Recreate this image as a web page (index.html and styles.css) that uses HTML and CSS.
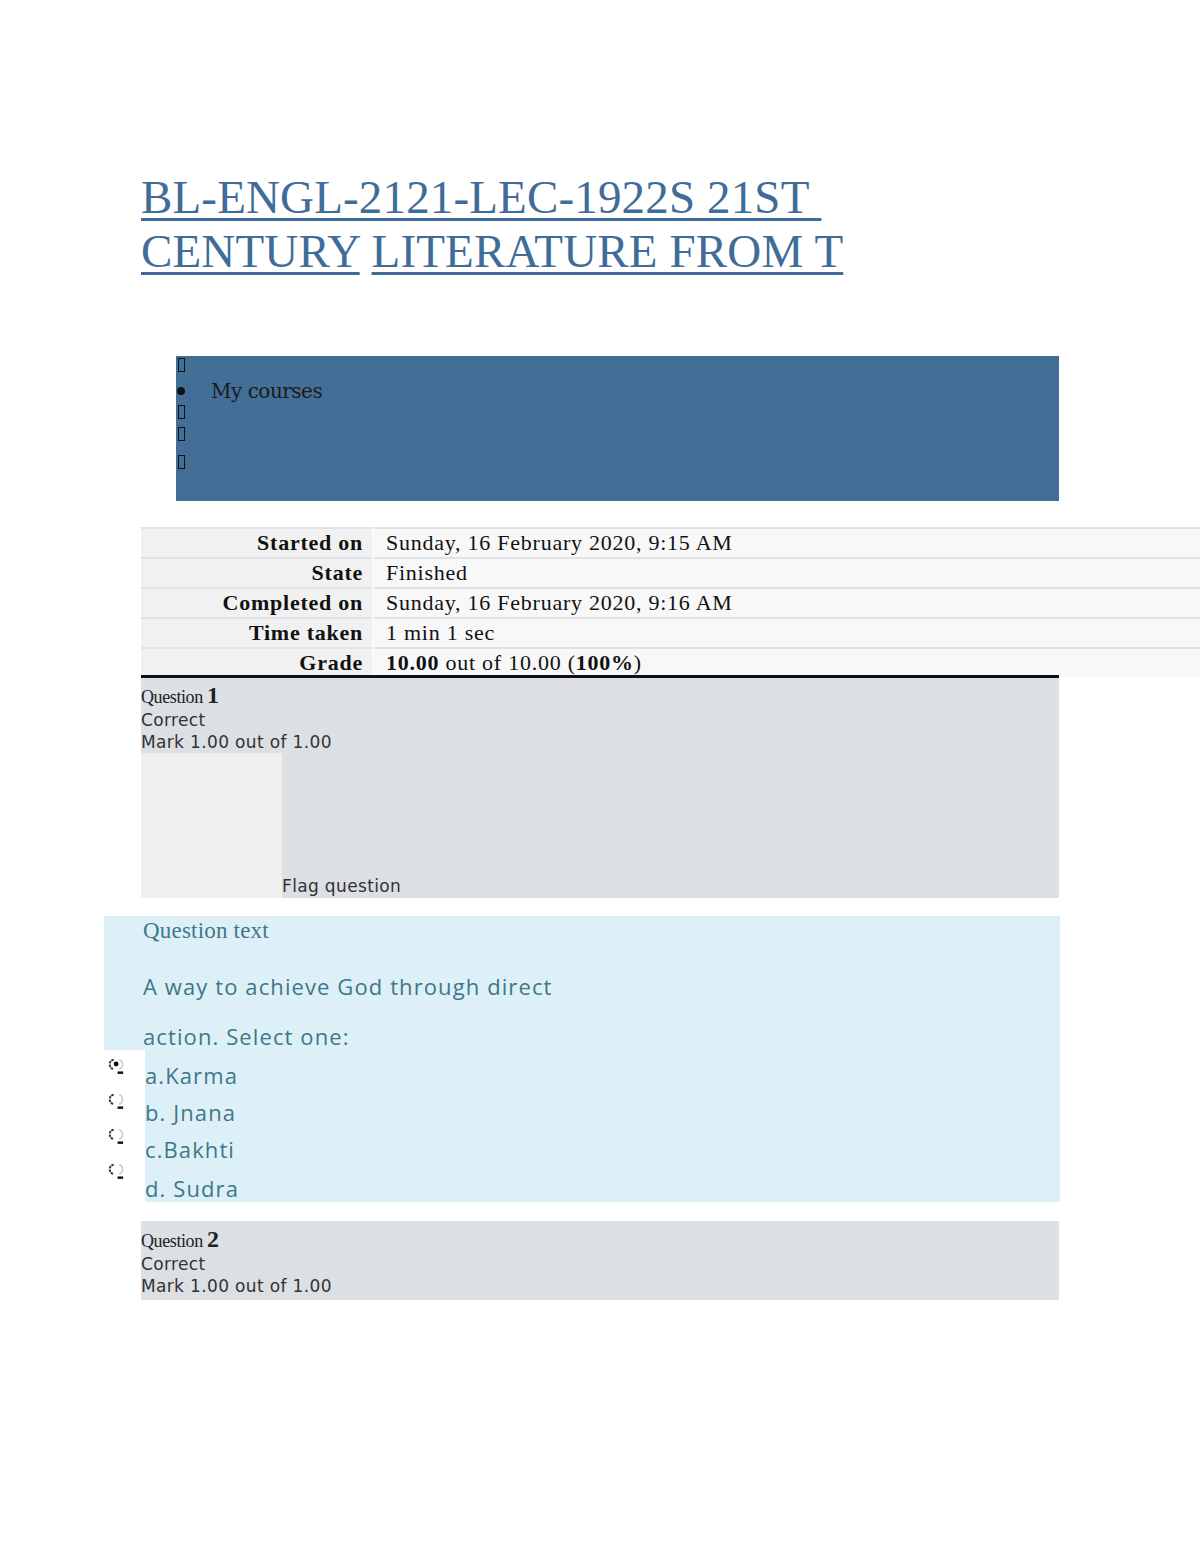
FILE: index.html
```html
<!DOCTYPE html>
<html lang="en">
<head>
<meta charset="utf-8">
<title>Quiz review</title>
<link rel="stylesheet" href="styles.css">
</head>
<body>
<div class="page">
  <h1 class="course-title">
    <a href="#" class="tlink">BL-ENGL-2121-LEC-1922S 21ST&nbsp;</a><br>
    <a href="#" class="tlink">CENTURY</a> <a href="#" class="tlink">LITERATURE FROM T</a>
  </h1>

  <nav class="navbox">
    <ul class="navlist">
      <li class="nav-item r1"><span class="tofu"></span></li>
      <li class="nav-item r2"><span class="dot"></span><span class="nav-text">My courses</span></li>
      <li class="nav-item r3"><span class="tofu"></span></li>
      <li class="nav-item r4"><span class="tofu"></span></li>
      <li class="nav-item r5"><span class="tofu"></span></li>
    </ul>
  </nav>

  <table class="summary">
    <tr><th>Started on</th><td>Sunday, 16 February 2020, 9:15 AM</td></tr>
    <tr><th>State</th><td>Finished</td></tr>
    <tr><th>Completed on</th><td>Sunday, 16 February 2020, 9:16 AM</td></tr>
    <tr><th>Time taken</th><td>1 min 1 sec</td></tr>
    <tr><th>Grade</th><td><b>10.00</b> out of 10.00 (<b>100%</b>)</td></tr>
  </table>

  <div class="qinfo q1">
    <div class="qhead">
      <div class="qno">Question <span class="num">1</span></div>
      <div class="qstate">Correct</div>
      <div class="qstate">Mark 1.00 out of 1.00</div>
    </div>
    <div class="qflag-row">
      <div class="qflag-left"></div>
      <div class="qflag-right"><span class="flag">Flag question</span></div>
    </div>
  </div>

  <div class="qtext-block">
    <div class="qtext-top">
      <div class="qtext-label">Question text</div>
      <div class="qtext-line first">A way to achieve God through direct</div>
      <div class="qtext-line">action. Select one:</div>
    </div>
    <div class="answers">
      <div class="radios">
        <svg class="radio" viewBox="0 0 18 18" width="20" height="20"><path d="M6 2.5 Q2.5 3 2.5 6.5 Q2.5 10 5.5 10.5" fill="none" stroke="#333" stroke-width="1.8" stroke-dasharray="2.2 0.8"/><path d="M11 2.5 Q14 3.5 14 7 Q13.5 10 11 11" fill="none" stroke="#c8c8c8" stroke-width="1.3"/><circle cx="8.2" cy="6.3" r="2.2" fill="#111"/><rect x="9.5" y="13" width="5" height="2.2" fill="#111"/></svg>
        <svg class="radio" viewBox="0 0 18 18" width="20" height="20"><path d="M6 2.5 Q2.5 3 2.5 6.5 Q2.5 10 5.5 10.5" fill="none" stroke="#333" stroke-width="1.8" stroke-dasharray="2.2 0.8"/><path d="M11 2.5 Q14 3.5 14 7 Q13.5 10 11 11" fill="none" stroke="#c8c8c8" stroke-width="1.3"/><rect x="9.5" y="13" width="5" height="2.2" fill="#111"/></svg>
        <svg class="radio" viewBox="0 0 18 18" width="20" height="20"><path d="M6 2.5 Q2.5 3 2.5 6.5 Q2.5 10 5.5 10.5" fill="none" stroke="#333" stroke-width="1.8" stroke-dasharray="2.2 0.8"/><path d="M11 2.5 Q14 3.5 14 7 Q13.5 10 11 11" fill="none" stroke="#c8c8c8" stroke-width="1.3"/><rect x="9.5" y="13" width="5" height="2.2" fill="#111"/></svg>
        <svg class="radio" viewBox="0 0 18 18" width="20" height="20"><path d="M6 2.5 Q2.5 3 2.5 6.5 Q2.5 10 5.5 10.5" fill="none" stroke="#333" stroke-width="1.8" stroke-dasharray="2.2 0.8"/><path d="M11 2.5 Q14 3.5 14 7 Q13.5 10 11 11" fill="none" stroke="#c8c8c8" stroke-width="1.3"/><rect x="9.5" y="13" width="5" height="2.2" fill="#111"/></svg>
      </div>
      <div class="options">
        <div class="opt">a.Karma</div>
        <div class="opt">b. Jnana</div>
        <div class="opt">c.Bakhti</div>
        <div class="opt">d. Sudra</div>
      </div>
    </div>
  </div>

  <div class="qinfo q2">
    <div class="qhead">
      <div class="qno">Question <span class="num">2</span></div>
      <div class="qstate">Correct</div>
      <div class="qstate">Mark 1.00 out of 1.00</div>
    </div>
  </div>
</div>
</body>
</html>
```

FILE: styles.css
```css
html, body {
  margin: 0;
  padding: 0;
  background: #ffffff;
}
body {
  font-family: "Liberation Serif", "Times New Roman", serif;
  color: #111;
}
.page {
  padding: 170px 0 0 141px;
}
.course-title {
  margin: 0;
  font-family: "Liberation Serif", serif;
  font-weight: normal;
  font-size: 47px;
  line-height: 54px;
  letter-spacing: 0.15px;
  color: #3f6c98;
}
.tlink {
  color: #3f6c98;
  text-decoration: underline;
  text-decoration-thickness: 3px;
  text-underline-offset: 5px;
}
.navbox {
  margin: 78px 0 0 35px;
  width: 883px;
  height: 145px;
  background: #436f97;
  box-sizing: border-box;
}
.navlist {
  list-style: none;
  margin: 0;
  padding: 0;
}
.nav-item {
  display: flex;
  align-items: flex-start;
  padding-left: 2px;
  box-sizing: border-box;
}
.r1 { height: 22px; padding-top: 2px; }
.r2 { height: 26px; align-items: center; }
.r3 { height: 22px; padding-top: 1px; }
.r4 { height: 27px; padding-top: 1px; }
.r5 { height: 30px; padding-top: 2px; }
.tofu {
  display: inline-block;
  width: 5px;
  height: 12px;
  border: 1.5px solid #111;
}
.dot {
  display: inline-block;
  width: 8px;
  height: 8px;
  border-radius: 50%;
  background: #111;
  margin-left: -1px;
}
.nav-text {
  margin-left: 26px;
  font-family: "DejaVu Serif", serif;
  font-size: 20px;
  color: #1a1a1a;
  letter-spacing: -0.5px;
}
.summary {
  margin-top: 26px;
  width: 1059px;
  border-collapse: collapse;
  font-family: "Liberation Serif", serif;
  font-size: 22px;
  letter-spacing: 0.75px;
}
.summary tr {
  border-top: 2px solid #dfe2e6;
}
.summary th {
  width: 232px;
  text-align: right;
  font-weight: bold;
  background: #f1f1f1;
  padding: 0 9px 0 0;
  height: 28px;
  line-height: 28px;
  box-sizing: border-box;
  border-right: 2px solid #fafafa;
}
.summary td {
  background: #f8f8f8;
  padding: 0 0 0 12px;
  height: 28px;
  line-height: 28px;
}
.qinfo {
  width: 918px;
  background: #dcdfe4;
}
.q1 {
  border-top: 3px solid #111;
  margin-top: -2px;
}
.qhead {
  padding-top: 5px;
}
.qno {
  font-family: "Liberation Serif", serif;
  font-size: 18px;
  line-height: 24px;
  color: #222;
  letter-spacing: -0.4px;
}
.num {
  font-size: 24px;
  font-weight: bold;
  letter-spacing: 0;
}
.qstate {
  font-family: "DejaVu Sans", sans-serif;
  font-size: 17px;
  line-height: 22px;
  letter-spacing: 0.35px;
  color: #333;
}
.qflag-row {
  display: flex;
  height: 145px;
}
.qflag-left {
  width: 141px;
  background: #efefef;
}
.qflag-right {
  flex: 1;
  display: flex;
  align-items: flex-end;
}
.flag {
  font-family: "DejaVu Sans", sans-serif;
  font-size: 17px;
  line-height: 22px;
  letter-spacing: 0.35px;
  color: #333;
  padding-bottom: 1px;
}
.qtext-block {
  margin: 18px 0 0 -37px;
  width: 956px;
}
.qtext-top {
  background: #ddf0f7;
  padding: 3px 0 0 39px;
  height: 134px;
  box-sizing: border-box;
}
.qtext-label {
  font-family: "Liberation Serif", serif;
  font-size: 23px;
  line-height: 24px;
  letter-spacing: 0.2px;
  color: #3f7788;
}
.qtext-line {
  font-family: "Open Sans", sans-serif;
  font-size: 22px;
  line-height: 50px;
  color: #3f7788;
  letter-spacing: 1.1px;
}
.qtext-line.first {
  margin-top: 18px;
}
.answers {
  display: flex;
}
.radios {
  width: 41px;
  background: #ffffff;
  display: flex;
  flex-direction: column;
  padding: 7px 0 0 3px;
  box-sizing: border-box;
  gap: 15px;
}
.radio {
  display: block;
}
.options {
  flex: 1;
  background: #ddf0f7;
  padding: 7px 0 0 0;
  height: 152px;
  box-sizing: border-box;
}
.opt {
  font-family: "Open Sans", sans-serif;
  font-size: 22px;
  line-height: 37px;
  color: #3f7788;
  letter-spacing: 1.1px;
}
.opt:last-child {
  margin-top: 2px;
}
.q2 {
  margin-top: 19px;
  height: 79px;
}
.q2 .qhead {
  padding-top: 6px;
}
```
